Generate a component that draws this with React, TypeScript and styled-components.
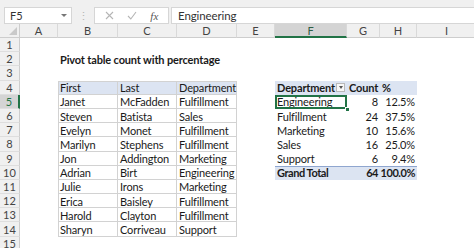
import React from "react";
import styled, { createGlobalStyle, css } from "styled-components";

const GlobalStyle = createGlobalStyle`
  html, body {
    margin: 0;
    padding: 0;
    background: #fff;
  }
  body {
    font-family: Lato, "Open Sans", sans-serif;
    overflow: hidden;
  }
`;

const Window = styled.div`
  width: 474px;
  height: 248px;
  overflow: hidden;
  display: flex;
  flex-direction: column;
  background: #fff;
`;

const FormulaBar = styled.div`
  height: 31px;
  box-sizing: border-box;
  background: #f0f0f0;
  display: flex;
  align-items: flex-start;
  padding: 7px 0 0 4px;
`;

const BarBox = styled.div`
  height: 17px;
  box-sizing: border-box;
  background: #fff;
  border: 1px solid #d6d6d6;
  display: flex;
  align-items: center;
  font-size: 11px;
  color: #333;
`;

const NameBox = styled(BarBox)`
  width: 68px;
  padding: 0 4px 0 5px;
  justify-content: space-between;
`;

const Caret = styled.span`
  width: 0;
  height: 0;
  border-left: 3px solid transparent;
  border-right: 3px solid transparent;
  border-top: 3px solid #777;
`;

const Dots = styled.div`
  width: 22px;
  height: 17px;
  display: flex;
  align-items: center;
  justify-content: center;
  color: #b5b5b5;
  font-size: 11px;
`;

const FxBox = styled(BarBox)`
  width: 75px;
  justify-content: space-around;
  padding: 0 3px;
  color: #b0b0b0;
`;

const FxLabel = styled.span`
  font-family: "Liberation Serif", serif;
  font-style: italic;
  font-size: 11px;
  color: #555;
`;

const FormulaInput = styled(BarBox)`
  flex: 1;
  margin-left: 2px;
  padding-left: 6px;
  border-right: none;
  font-size: 11.5px;
  letter-spacing: -0.1px;
`;

const Sheet = styled.div`
  display: grid;
  grid-template-columns: 20px 38px 60px 59px 60px 38px 72px 33px 37px 60px;
  grid-template-rows: 14px;
  grid-auto-rows: 14.2px;
  font-size: 11px;
  letter-spacing: -0.15px;
  color: #1a1a1a;
`;

const Corner = styled.div`
  position: relative;
  background: #f0f0f0;
  border-right: 1px solid #cdcdcd;
  border-bottom: 1px solid #cdcdcd;
  box-sizing: border-box;
  &::after {
    content: "";
    position: absolute;
    right: 2px;
    bottom: 2px;
    border-left: 8px solid transparent;
    border-bottom: 8px solid #c9c9c9;
  }
`;

const ColHeader = styled.div<{ $on?: boolean }>`
  box-sizing: border-box;
  background: ${(p) => (p.$on ? "#d4d4d4" : "#f0f0f0")};
  border-right: 1px solid #d9d9d9;
  border-bottom: ${(p) => (p.$on ? "2px solid #217346" : "1px solid #cdcdcd")};
  color: ${(p) => (p.$on ? "#2f5f45" : "#444")};
  font-size: 11px;
  letter-spacing: 0;
  display: flex;
  align-items: center;
  justify-content: center;
`;

const RowHeader = styled.div<{ $on?: boolean }>`
  box-sizing: border-box;
  background: ${(p) => (p.$on ? "#d4d4d4" : "#f0f0f0")};
  border-right: ${(p) => (p.$on ? "2px solid #217346" : "1px solid #cdcdcd")};
  border-bottom: 1px solid #dedede;
  color: ${(p) => (p.$on ? "#217346" : "#444")};
  font-size: 11px;
  letter-spacing: 0;
  display: flex;
  align-items: center;
  justify-content: center;
`;

type Kind = "plain" | "title" | "tblHead" | "tblBody" | "pvHead" | "pvBody" | "pvTotal";

const blueFill = "#dce4f2";

const Cell = styled.div<{
  $kind: Kind;
  $right?: boolean;
  $left?: boolean;
  $top?: boolean;
  $active?: boolean;
}>`
  position: relative;
  box-sizing: border-box;
  display: flex;
  align-items: center;
  justify-content: ${(p) => (p.$right ? "flex-end" : "flex-start")};
  padding: 0 2px 0 2px;
  white-space: nowrap;
  overflow: visible;
  line-height: 1;
  ${(p) =>
    (p.$kind === "tblHead" || p.$kind === "tblBody") &&
    css`
      box-shadow: inset -1px -1px 0 #d2d2d2
        ${p.$left ? ", inset 1px 0 0 #d2d2d2" : ""}
        ${p.$top ? ", inset 0 1px 0 #d2d2d2" : ""};
    `}
  ${(p) =>
    p.$kind === "tblHead" &&
    css`
      background: ${blueFill};
    `}
  ${(p) =>
    (p.$kind === "title" || p.$kind === "pvHead" || p.$kind === "pvTotal") &&
    css`
      font-weight: 700;
    `}
  ${(p) =>
    p.$kind === "pvHead" &&
    css`
      background: ${blueFill};
    `}
  ${(p) =>
    p.$kind === "pvTotal" &&
    css`
      background: ${blueFill};
      box-shadow: inset 0 1px 0 #8fa6cf;
      letter-spacing: -0.45px;
    `}
  ${(p) =>
    p.$active &&
    css`
      &::after {
        content: "";
        position: absolute;
        inset: 0;
        border: 2px solid #217346;
        z-index: 2;
      }
      &::before {
        content: "";
        position: absolute;
        right: -3px;
        bottom: -3px;
        width: 5px;
        height: 5px;
        background: #217346;
        border: 1px solid #fff;
        box-sizing: border-box;
        z-index: 3;
      }
    `}
`;

const FilterButton = styled.span`
  position: absolute;
  right: 2px;
  top: 2px;
  width: 9px;
  height: 9px;
  box-sizing: border-box;
  border: 1px solid #b9b9b9;
  background: #f7f7f7;
  display: flex;
  align-items: center;
  justify-content: center;
  &::after {
    content: "";
    border-left: 2.5px solid transparent;
    border-right: 2.5px solid transparent;
    border-top: 3px solid #555;
  }
`;

const columns = ["A", "B", "C", "D", "E", "F", "G", "H", "I"];

const people: [string, string, string][] = [
  ["Janet", "McFadden", "Fulfillment"],
  ["Steven", "Batista", "Sales"],
  ["Evelyn", "Monet", "Fulfillment"],
  ["Marilyn", "Stephens", "Fulfillment"],
  ["Jon", "Addington", "Marketing"],
  ["Adrian", "Birt", "Engineering"],
  ["Julie", "Irons", "Marketing"],
  ["Erica", "Baisley", "Fulfillment"],
  ["Harold", "Clayton", "Fulfillment"],
  ["Sharyn", "Corriveau", "Support"],
];

const pivot: [string, string, string][] = [
  ["Engineering", "8", "12.5%"],
  ["Fulfillment", "24", "37.5%"],
  ["Marketing", "10", "15.6%"],
  ["Sales", "16", "25.0%"],
  ["Support", "6", "9.4%"],
];

type Spec = { text?: string; kind: Kind; right?: boolean; left?: boolean; top?: boolean; active?: boolean; filter?: boolean };

const getCell = (row: number, col: number): Spec => {
  // col: 0 = A ... 8 = I
  if (row === 2 && col === 1) return { text: "Pivot table count with percentage", kind: "title" };
  if (col >= 1 && col <= 3 && row >= 4 && row <= 14) {
    if (row === 4) return { text: ["First", "Last", "Department"][col - 1], kind: "tblHead", left: col === 1, top: true };
    return { text: people[row - 5][col - 1], kind: "tblBody", left: col === 1 };
  }
  if (col >= 5 && col <= 7) {
    const i = col - 5;
    if (row === 4) return { text: ["Department", "Count", "%"][i], kind: "pvHead", filter: i === 0 };
    if (row >= 5 && row <= 9) return { text: pivot[row - 5][i], kind: "pvBody", right: i > 0, active: row === 5 && i === 0 };
    if (row === 10) return { text: ["Grand Total", "64", "100.0%"][i], kind: "pvTotal", right: i > 0 };
  }
  return { kind: "plain" };
};

const rows = Array.from({ length: 15 }, (_, i) => i + 1);

export default function App() {
  return (
    <Window>
      <GlobalStyle />
      <FormulaBar>
        <NameBox>
          F5
          <Caret />
        </NameBox>
        <Dots>⋮</Dots>
        <FxBox>
          <svg width="9" height="9" viewBox="0 0 9 9">
            <path d="M1 1L8 8M8 1L1 8" stroke="#b5b5b5" strokeWidth="1.1" />
          </svg>
          <svg width="10" height="9" viewBox="0 0 10 9">
            <path d="M1 5L3.8 8L9 1" stroke="#b5b5b5" strokeWidth="1.1" fill="none" />
          </svg>
          <FxLabel>fx</FxLabel>
        </FxBox>
        <FormulaInput>Engineering</FormulaInput>
      </FormulaBar>
      <Sheet>
        <Corner />
        {columns.map((c) => (
          <ColHeader key={c} $on={c === "F"}>
            {c}
          </ColHeader>
        ))}
        {rows.map((r) => (
          <React.Fragment key={r}>
            <RowHeader $on={r === 5}>{r}</RowHeader>
            {columns.map((c, ci) => {
              const s = getCell(r, ci);
              return (
                <Cell
                  key={c}
                  $kind={s.kind}
                  $right={s.right}
                  $left={s.left}
                  $top={s.top}
                  $active={s.active}
                >
                  {s.text}
                  {s.filter && <FilterButton />}
                </Cell>
              );
            })}
          </React.Fragment>
        ))}
      </Sheet>
    </Window>
  );
}
